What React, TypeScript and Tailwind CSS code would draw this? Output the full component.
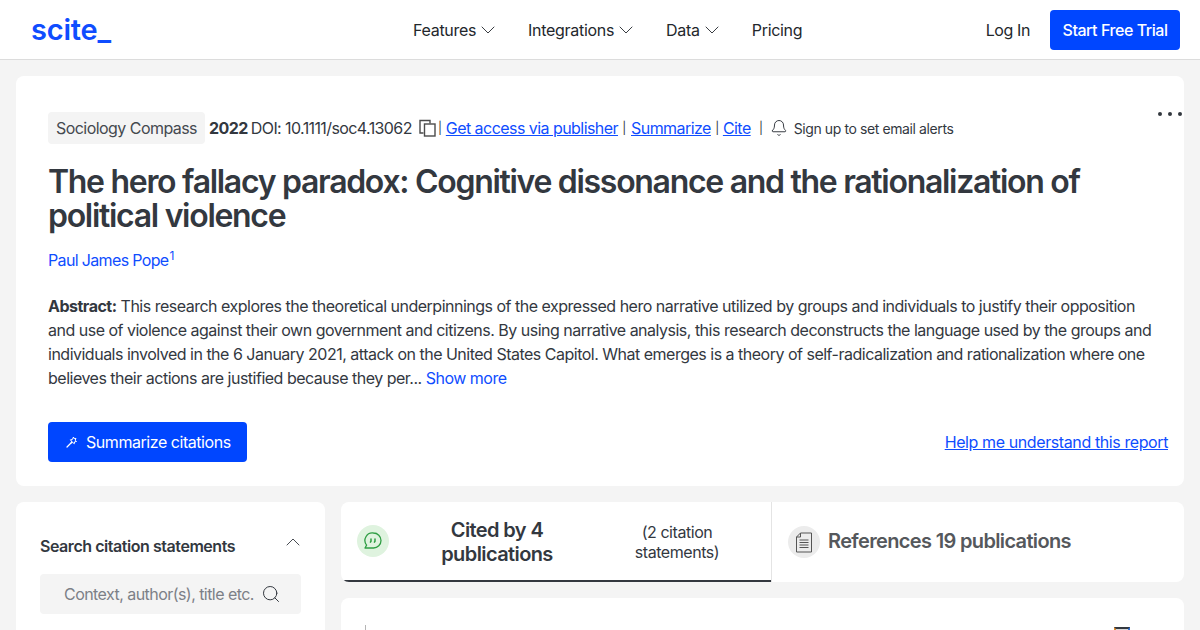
import React from 'react';
import { ChevronDown, ChevronUp, Search, Bell } from 'lucide-react';

const navItems = ['Features', 'Integrations', 'Data'];

const CopyIcon = () => (
  <svg width="18" height="18" viewBox="0 0 18 18" fill="none" stroke="#4b4b4b" strokeWidth="1.4" className="ml-[7px] mr-[1px]">
    <path d="M4.5 14H1V1.5H11V4.5" />
    <rect x="5.5" y="5" width="10.5" height="12" />
  </svg>
);

const WandIcon = () => (
  <svg width="12" height="12" viewBox="0 0 12 12" fill="none" className="mr-[8px]">
    <path d="M1 11L6 6" stroke="white" strokeWidth="1.2" strokeLinecap="round" />
    <path d="M7.5 1l.6 1.7 1.9-.3-.8 1.8 1.3 1.3-1.9.3-.3 1.9-1.5-1.2-1.7.6.5-1.9-1.2-1.4 1.9-.2z" stroke="white" strokeWidth="1" strokeLinejoin="round" />
  </svg>
);

const QuoteIcon = () => (
  <svg width="20" height="20" viewBox="0 0 20 20" fill="none">
    <path d="M10.5 2a7.5 7.5 0 0 1 0 15H2l1.6-2.9A7.5 7.5 0 0 1 10.5 2z" stroke="#2f9e44" strokeWidth="1.3" strokeLinejoin="round" />
    <path d="M8 8v2.2l-.6 1M12 8v2.2l-.6 1" stroke="#2f9e44" strokeWidth="1.5" strokeLinecap="round" />
  </svg>
);

const DocIcon = () => (
  <svg width="18" height="21" viewBox="0 0 18 21" fill="none" stroke="#555" strokeWidth="1">
    <path d="M5.5 1H16.5V20H1.5V5z" />
    <path d="M5.5 1V5H1.5" />
    <path d="M4.5 8H13.5M4.5 10.5H13.5M4.5 13H13.5M4.5 15.5H13.5" strokeWidth="1.2" />
  </svg>
);

export default function App() {
  return (
    <div className="h-[630px] overflow-hidden bg-[#f4f4f4] text-[#33383f] font-['Inter','Liberation_Sans',sans-serif] tracking-[-0.45px]">
      {/* Header */}
      <header className="h-[60px] bg-white border-b border-[#dcdcdc] flex items-center pl-[31px] pr-[20px]">
        <div className="w-[350px] text-[29px] leading-none font-semibold text-[#0f4dff] tracking-[-0.2px] pb-[1px]">scite_</div>
        <nav className="flex items-center text-[16px] ml-[32px] tracking-[-0.3px] text-[#23272c]">
          {navItems.map((item) => (
            <div key={item} className="flex items-center mr-[28px]">
              <span>{item}</span>
              <ChevronDown size={24} strokeWidth={0.9} />
            </div>
          ))}
          <span>Pricing</span>
        </nav>
        <div className="ml-auto flex items-center">
          <span className="text-[16px] mr-[20px] tracking-[-0.4px] text-[#23272c]">Log In</span>
          <button className="h-[40px] w-[130px] rounded-[4px] bg-[#0046ff] text-white text-[16px] font-medium">Start Free Trial</button>
        </div>
      </header>

      <div className="px-[16px] pt-[16px]">
        {/* Paper card */}
        <section className="relative h-[410px] bg-white rounded-[8px] px-[32px] pt-[36px]">
          <div className="absolute right-[2px] top-[36px] flex gap-[6px]">
            <span className="w-[4px] h-[4px] rounded-full bg-[#33383f]" />
            <span className="w-[4px] h-[4px] rounded-full bg-[#33383f]" />
            <span className="w-[4px] h-[4px] rounded-full bg-[#33383f]" />
          </div>

          <div className="flex items-center text-[16px] h-[32px] whitespace-nowrap tracking-[-0.55px]">
            <span className="h-[32px] w-[157px] flex items-center pl-[8px] rounded-[4px] bg-[#f4f4f4] text-[#44494f]">Sociology Compass</span>
            <span className="font-bold ml-[4px]">2022</span>
            <span className="ml-[3px] tracking-[-0.6px]">DOI: 10.1111/soc4.13062</span>
            <CopyIcon />
            <span className="w-[4px] text-center text-[12px]">|</span>
            <span className="ml-[4px] text-[#0f4dff] underline">Get access via publisher</span>
            <span className="ml-[4px] w-[4px] text-center text-[12px]">|</span>
            <span className="ml-[5px] text-[#0f4dff] underline">Summarize</span>
            <span className="ml-[4px] w-[4px] text-center text-[12px]">|</span>
            <span className="ml-[4px] text-[#0f4dff] underline">Cite</span>
            <span className="ml-[8px] w-[4px] text-center text-[12px]">|</span>
            <Bell size={18} strokeWidth={1.3} className="ml-[7px]" />
            <span className="ml-[6px] text-[14px] tracking-[-0.4px]">Sign up to set email alerts</span>
          </div>

          <h1 className="mt-[21px] text-[32px] leading-[34px] font-semibold tracking-[-1.3px]">
            The hero fallacy paradox: Cognitive dissonance and the rationalization of political violence
          </h1>

          <div className="mt-[15px] text-[16px] leading-[24px] text-[#0f4dff] tracking-[-0.65px]">
            Paul James Pope<sup className="text-[12px] ml-[1px]">1</sup>
          </div>

          <p className="mt-[22px] text-[16px] leading-[24px] tracking-[-0.5px]">
            <b>Abstract:</b> This research explores the theoretical underpinnings of the expressed hero narrative utilized by groups and individuals to justify their opposition and use of violence against their own government and citizens. By using narrative analysis, this research deconstructs the language used by the groups and individuals involved in the 6 January 2021, attack on the United States Capitol. What emerges is a theory of self-radicalization and rationalization where one believes their actions are justified because they per... <span className="text-[#0f4dff]">Show more</span>
          </p>

          <div className="mt-[32px] flex items-center justify-between -mr-[16px]">
            <button className="h-[40px] w-[199px] rounded-[4px] bg-[#0046ff] text-white text-[16px] flex items-center pl-[18px] pb-[1px]">
              <WandIcon />
              Summarize citations
            </button>
            <span className="text-[16px] text-[#0f4dff] underline tracking-[-0.4px]">Help me understand this report</span>
          </div>
        </section>

        {/* Lower row */}
        <div className="mt-[16px] flex gap-[16px]">
          <aside className="w-[309px] h-[200px] bg-white rounded-[8px] px-[24px] pt-[32px] shrink-0">
            <div className="flex items-center justify-between h-[24px]">
              <span className="text-[16px] font-semibold">Search citation statements</span>
              <ChevronUp size={24} strokeWidth={0.9} className="-mt-[8px] -mr-[4px]" />
            </div>
            <div className="mt-[16px] h-[40px] rounded-[4px] bg-[#f4f4f4] flex items-center pl-[24px] text-[16px] text-[#7c8087] whitespace-nowrap tracking-[-0.55px]">
              Context, author(s), title etc.
              <Search size={20} strokeWidth={1.2} className="ml-[7px] text-[#33383f]" />
            </div>
          </aside>

          <div className="flex-1">
            <div className="h-[80px] bg-white rounded-[8px] flex overflow-hidden">
              <div className="w-[430px] border-b-2 border-[#33383f] flex items-center pl-[16px]">
                <span className="w-[32px] h-[32px] rounded-full bg-[#dff3df] flex items-center justify-center shrink-0">
                  <QuoteIcon />
                </span>
                <span className="w-[160px] ml-[28px] pt-[2px] text-[20px] leading-[24px] font-semibold text-center tracking-[-0.6px]">Cited by 4 publications</span>
                <span className="ml-[40px] w-[120px] pt-[2px] text-[16px] leading-[20px] text-center">(2 citation statements)</span>
              </div>
              <div className="flex-1 border-l border-[#e4e4e4] flex items-center pl-[16px]">
                <span className="w-[32px] h-[32px] rounded-full bg-[#ececec] flex items-center justify-center shrink-0">
                  <DocIcon />
                </span>
                <span className="ml-[8px] pb-[2px] text-[20px] font-semibold text-[#55585c] tracking-[-0.65px]">References 19 publications</span>
              </div>
            </div>
            <div className="mt-[16px] h-[120px] bg-white rounded-[8px] flex justify-between items-start pl-[24px] pr-[54px] pt-[27px]">
              <span className="w-[1px] h-[8px] bg-[#b5b5b5]" />
              <span className="w-[16px] h-[6px] mt-[2px] bg-[#d8d8d8] border-t-2 border-l-2 border-r-2 border-t-[#33383f] border-l-[#e08a2e] border-r-[#2f6fd6]" />
            </div>
          </div>
        </div>
      </div>
    </div>
  );
}
